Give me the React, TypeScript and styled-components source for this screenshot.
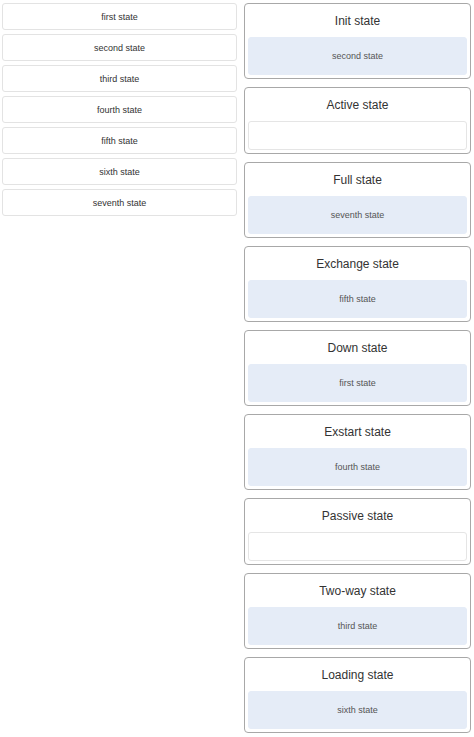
import styled, { createGlobalStyle } from "styled-components";

const GlobalStyle = createGlobalStyle`
  html, body {
    margin: 0;
    padding: 0;
    background: #fff;
    font-family: "Liberation Sans", Arial, sans-serif;
    color: #333;
  }
`;

const sources = [
  "first state",
  "second state",
  "third state",
  "fourth state",
  "fifth state",
  "sixth state",
  "seventh state",
];

const targets: { title: string; answer?: string }[] = [
  { title: "Init state", answer: "second state" },
  { title: "Active state" },
  { title: "Full state", answer: "seventh state" },
  { title: "Exchange state", answer: "fifth state" },
  { title: "Down state", answer: "first state" },
  { title: "Exstart state", answer: "fourth state" },
  { title: "Passive state" },
  { title: "Two-way state", answer: "third state" },
  { title: "Loading state", answer: "sixth state" },
];

const App = () => {
  return (
    <Page>
      <GlobalStyle />
      <SourceList>
        {sources.map((s) => (
          <SourceItem key={s}>{s}</SourceItem>
        ))}
      </SourceList>
      <TargetList>
        {targets.map((t) => (
          <TargetCard key={t.title}>
            <TargetTitle>{t.title}</TargetTitle>
            <DropZone $filled={!!t.answer}>{t.answer}</DropZone>
          </TargetCard>
        ))}
      </TargetList>
    </Page>
  );
};

const Page = styled.div`
  display: grid;
  grid-template-columns: 235px 227px;
  column-gap: 7px;
  padding: 3px 0 0 2px;
  align-items: start;
`;

const SourceList = styled.div`
  display: flex;
  flex-direction: column;
  gap: 4px;
`;

const SourceItem = styled.div`
  height: 27px;
  box-sizing: border-box;
  border: 1px solid #e3e3e3;
  border-radius: 3px;
  display: flex;
  align-items: center;
  justify-content: center;
  font-size: 9px;
  color: #333;
  background: #fff;
`;

const TargetList = styled.div`
  display: flex;
  flex-direction: column;
  gap: 8px;
`;

const TargetCard = styled.div`
  box-sizing: border-box;
  border: 1px solid #a8a8a8;
  border-radius: 4px;
  padding: 0 3px 3px;
  background: #fff;
`;

const TargetTitle = styled.div`
  height: 33px;
  display: flex;
  align-items: center;
  justify-content: center;
  font-size: 12px;
  color: #333;
`;

const DropZone = styled.div<{ $filled: boolean }>`
  box-sizing: border-box;
  height: ${(p) => (p.$filled ? "38px" : "29px")};
  border: 1px solid ${(p) => (p.$filled ? "#e5ecf7" : "#e5e5e5")};
  border-radius: 3px;
  background: ${(p) => (p.$filled ? "#e5ecf7" : "#fff")};
  display: flex;
  align-items: center;
  justify-content: center;
  font-size: 9px;
  color: #555;
`;

export default App;
